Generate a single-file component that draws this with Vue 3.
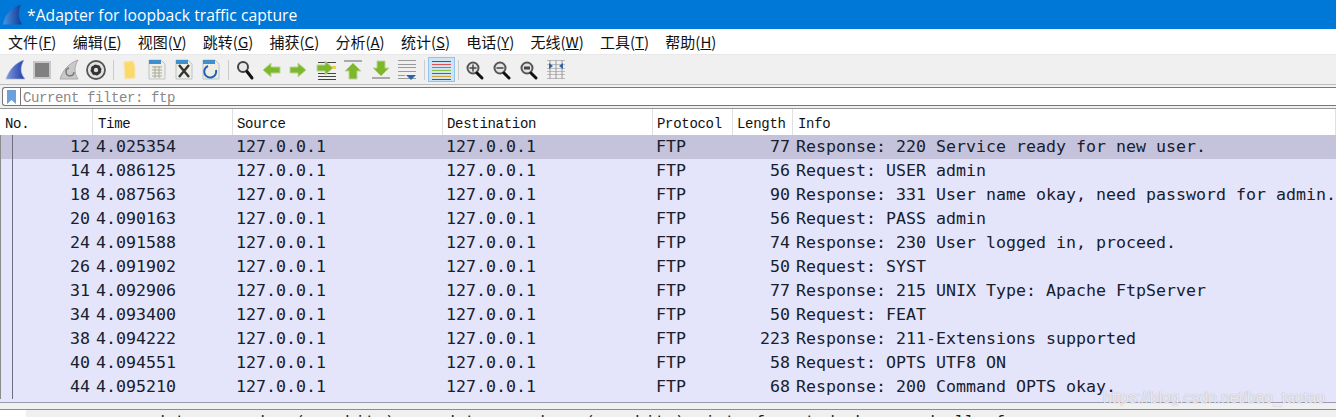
<script setup>
const menus = [['文件','F'],['编辑','E'],['视图','V'],['跳转','G'],['捕获','C'],['分析','A'],['统计','S'],['电话','Y'],['无线','W'],['工具','T'],['帮助','H']]
const cols = [
  { t: 'No.', w: 93 }, { t: 'Time', w: 140 }, { t: 'Source', w: 210 }, { t: 'Destination', w: 210 },
  { t: 'Protocol', w: 80 }, { t: 'Length', w: 60 }, { t: 'Info', w: 543 }
]
const rows = [
  [12,'4.025354',77,'Response: 220 Service ready for new user.'],
  [14,'4.086125',56,'Request: USER admin'],
  [18,'4.087563',90,'Response: 331 User name okay, need password for admin.'],
  [20,'4.090163',56,'Request: PASS admin'],
  [24,'4.091588',74,'Response: 230 User logged in, proceed.'],
  [26,'4.091902',50,'Request: SYST'],
  [31,'4.092906',77,'Response: 215 UNIX Type: Apache FtpServer'],
  [34,'4.093400',50,'Request: FEAT'],
  [38,'4.094222',223,'Response: 211-Extensions supported'],
  [40,'4.094551',58,'Request: OPTS UTF8 ON'],
  [44,'4.095210',68,'Response: 200 Command OPTS okay.']
]
const detail = 'data queued   (on white)     data rowed    (on white)point of neat dark sensed all of'
</script>

<template>
  <div class="app">
    <div class="title">
      <svg class="shark" viewBox="0 0 24 24" width="24" height="24">
        <defs><linearGradient id="fin" x1="0" y1="0" x2="1" y2="0"><stop offset="0" stop-color="#4a94e4"/><stop offset="1" stop-color="#0f3a94"/></linearGradient></defs>
        <path d="M3 21.500 C5 11 12 4 21 1.500 C18 8 18 15 22 21.500 Z" fill="url(#fin)"/>
      </svg>
      <span>*Adapter for loopback traffic capture</span>
    </div>
    <div class="menu">
      <span v-for="m in menus" :key="m[1]" class="mi">{{ m[0] }}(<u>{{ m[1] }}</u>)</span>
    </div>
    <div class="tools">
      <svg viewBox="0 0 598 29" width="598" height="29">
        <defs><linearGradient id="fin2" x1="0" y1="0" x2="1" y2="0"><stop offset="0" stop-color="#7f9bdc"/><stop offset="1" stop-color="#1f39ab"/></linearGradient></defs>
        <path d="M6 24 C9 15 15 8 24 5 C20 12 20 18 25 24 Z" fill="url(#fin2)" stroke="#a9b2cc" stroke-width=".6"/>
        <rect x="34" y="7" width="16" height="16" fill="#808080" stroke="#c8c8c8" stroke-width="2"/>
        <path d="M60 24 C63 15 69 8 78 5 C74 12 74 18 78 24 Z" fill="#c9c9c9" stroke="#aaa"/>
        <path d="M69 13 A4 4 0 1 0 74 17" fill="none" stroke="#777" stroke-width="1.500"/>
        <circle cx="96" cy="15" r="9" fill="#e4e4e4" stroke="#555" stroke-width="1.800"/>
        <circle cx="96" cy="15" r="5.500" fill="#333"/>
        <circle cx="96" cy="15" r="5.500" fill="none" stroke="#e4e4e4" stroke-width="1" stroke-dasharray="1.500 2.800"/>
        <circle cx="96" cy="15" r="2.200" fill="#ddd"/>
        <line x1="113.500" y1="5" x2="113.500" y2="25" stroke="#ccc"/>
        <path d="M124 7 L133 6 L135 11 L135 23 L125 24 Z" fill="#fbd96b" stroke="#f3e6ba"/>
        <g transform="translate(0 -2)">
          <path d="M149 7 H161 L165 11 V26 H149 Z" fill="#f0efe6" stroke="#b9c4cf"/>
          <path d="M149 7 H161 V11 H149 Z" fill="#3f8fcd"/>
          <path d="M152 14 H162 M152 17 H162 M152 20 H162 M152 23 H162 M155 13 V25 M159 13 V25" stroke="#a8a89c"/>
          <path d="M176 7 H188 L192 11 V26 H176 Z" fill="#efeee5" stroke="#b9c4cf"/>
          <path d="M176 7 H188 V11 H176 Z" fill="#3f8fcd"/>
          <path d="M179 12 L189 24 M189 12 L179 24" stroke="#333" stroke-width="2.400"/>
          <path d="M203 7 H215 L219 11 V26 H203 Z" fill="#eeede4" stroke="#b9c4cf"/>
          <path d="M203 7 H215 V11 H203 Z" fill="#3f8fcd"/>
          <path d="M208 13 A6 6 0 1 0 216 17" fill="none" stroke="#1f5fb2" stroke-width="2"/>
        </g>
        <line x1="228.500" y1="5" x2="228.500" y2="25" stroke="#ccc"/>
        <g fill="none" stroke-linecap="round">
          <circle cx="243" cy="12" r="5" stroke="#444" stroke-width="2" fill="#e8e8e8"/>
          <line x1="247" y1="16.500" x2="252" y2="23" stroke="#111" stroke-width="3"/>
        </g>
        <path d="M263 15 L271 8 V12 H280 V18 H271 V22 Z" fill="#7cb82a" stroke="#bcd49a"/>
        <path d="M306 15 L298 8 V12 H290 V18 H298 V22 Z" fill="#7cb82a" stroke="#bcd49a"/>
        <path d="M318 7.500 H336 M318 21.500 H336 M318 24.500 H336 M318 18.500 H336" stroke="#444"/>
        <path d="M332 11 H336 V14 H332 Z" fill="#f0d040"/>
        <path d="M333 13 L325 6 V10 H317 V16 H325 V20 Z" fill="#7cb82a" stroke="#bcd49a"/>
        <line x1="344" y1="6" x2="362" y2="6" stroke="#aaa" stroke-width="2"/>
        <path d="M353 8 L361 16 H357 V24 H349 V16 H345 Z" fill="#7cb82a" stroke="#bcd49a"/>
        <line x1="372" y1="23" x2="390" y2="23" stroke="#aaa" stroke-width="2"/>
        <path d="M381 21 L373 13 H377 V6 H385 V13 H389 Z" fill="#7cb82a" stroke="#bcd49a"/>
        <path d="M398 5.500 H416 M398 9.500 H416 M398 12.500 H416 M398 16.500 H416 M398 20.500 H405 M398 23.500 H416" stroke="#9a9a9a"/>
        <path d="M406 20 H416 L411 25 Z" fill="#2a64ad"/>
        <line x1="424.500" y1="5" x2="424.500" y2="25" stroke="#ccc"/>
        <rect x="428.500" y="2.500" width="26" height="24" fill="#cde4f7" stroke="#90c4ee"/>
        <path d="M432 6.500 H451" stroke="#555"/><path d="M432 9.500 H451" stroke="#e05050"/>
        <path d="M432 12.500 H451" stroke="#888"/><path d="M432 15.500 H451" stroke="#8cc040"/>
        <path d="M432 18.500 H451" stroke="#7050a0"/><path d="M432 21.500 H451" stroke="#d0a030"/>
        <path d="M432 24.500 H451" stroke="#555"/>
        <line x1="458.500" y1="5" x2="458.500" y2="25" stroke="#ccc"/>
        <g stroke-linecap="round">
          <circle cx="473" cy="13" r="5.500" stroke="#555" stroke-width="2" fill="#e4e4e4"/>
          <path d="M477 18 L482 23" stroke="#111" stroke-width="3"/>
          <path d="M470 13 H476 M473 10 V16" stroke="#444" stroke-width="1.500"/>
          <circle cx="500" cy="13" r="5.500" stroke="#555" stroke-width="2" fill="#e4e4e4"/>
          <path d="M504 18 L509 23" stroke="#111" stroke-width="3"/>
          <path d="M497 13 H503" stroke="#444" stroke-width="1.500"/>
          <circle cx="527" cy="13" r="5.500" stroke="#555" stroke-width="2" fill="#e4e4e4"/>
          <path d="M531 18 L536 23" stroke="#111" stroke-width="3"/>
          <rect x="524" y="11.500" width="6" height="3" fill="#444" stroke="none"/>
        </g>
        <path d="M547 5.500 H565 M547 23.500 H565 M547 9.500 H565 M547 19.500 H565 M547 13.500 H565 M547 16.500 H565" stroke="#bbb"/>
        <path d="M550 5 V24 M556 5 V24 M562 5 V24" stroke="#999"/>
        <path d="M549 8 L553 11 L549 14 Z M563 8 L559 11 L563 14 Z" fill="#2a64ad"/>
      </svg>
    </div>
    <div class="filter">
      <div class="book">
        <svg width="9" height="14" viewBox="0 0 9 14"><path d="M0 0 H9 V14 L4.500 10 L0 14 Z" fill="#6f9fd8"/></svg>
      </div>
      <span class="ftext">Current filter: ftp</span>
    </div>
    <div class="list">
      <div class="head">
        <div v-for="c in cols" :key="c.t" class="hc" :style="{ width: c.w + 'px' }">{{ c.t }}</div>
      </div>
      <div class="body">
        <div v-for="(r, i) in rows" :key="r[0]" class="row" :class="{ sel: i === 0 }">
          <div class="tree"></div>
          <div class="c no">{{ r[0] }}</div>
          <div class="c time">{{ r[1] }}</div>
          <div class="c addr">127.0.0.1</div>
          <div class="c addr">127.0.0.1</div>
          <div class="c proto">FTP</div>
          <div class="c len">{{ r[2] }}</div>
          <div class="c info">{{ r[3] }}</div>
        </div>
      </div>
    </div>
    <div class="detail">
      <div class="gutter"></div>
      <div class="dtext">{{ detail }}</div>
    </div>
    <div class="wm">https://blog.csdn.net/bao_taotao</div>
  </div>
</template>

<style scoped>
.app { position: relative; width: 1336px; height: 417px; overflow: hidden; background: #f0f0f0; font-family: "Liberation Sans", sans-serif; }
.title { height: 29px; background: #0078d7; color: #fff; display: flex; align-items: center; padding-left: 0; font: 15.700px "Open Sans", "Noto Sans", sans-serif; }
.shark { flex: none; margin: 0 3px 0 0; }
.menu { height: 25px; background: #fff; border-bottom: 1px solid #e8e8e8; display: flex; align-items: center; padding-left: 8px; gap: 16.200px; font: 15px "Noto Sans CJK SC", sans-serif; color: #111; }
.mi { white-space: nowrap; }
.tools { height: 29px; background: #f0f0f0; border-bottom: 1px solid #bdbdbd; }
.tools svg { display: block; }
.filter { box-sizing: border-box; height: 19px; margin: 2px 0 0 2px; background: #fff; border: 1px solid #777; border-right: none; border-radius: 3px 0 0 3px; display: flex; align-items: center; color: #888; font: 14px "Liberation Mono", monospace; letter-spacing: -.4px; }
.ftext { padding-top: 2px; }
.book { flex: none; box-sizing: border-box; width: 18px; height: 17px; border-right: 1px solid #777; display: flex; align-items: center; justify-content: center; margin-right: 2px; }
.list { margin-top: 2px; border-top: 1px solid #999; }
.head { height: 26px; background: #fff; display: flex; }
.hc { flex: none; border-right: 1px solid #e0e0e0; padding: 3px 0 0 4px; box-sizing: border-box; font: 14px/24px "Liberation Mono", monospace; letter-spacing: -.3px; color: #111; }
.hc:nth-child(1), .hc:nth-child(2), .hc:nth-child(7) { padding-left: 5px; }
.body { background: #e4e4fb; border-bottom: 1px solid #9a9ab0; padding-bottom: 3px; }
.row { box-sizing: border-box; height: 24px; padding-bottom: 2px; display: flex; align-items: center; color: #16202c; font: 16.610px "DejaVu Sans Mono", monospace; white-space: pre; position: relative; box-shadow: inset 1px 0 0 #8c8c8c; }
.row.sel { background: #c5c3dc; }
.tree { position: absolute; left: 12px; top: 0; bottom: 0; border-left: 1px solid #6e6e7e; }
.c { box-sizing: border-box; flex: none; }
.no { width: 93px; padding-right: 3px; text-align: right; }
.time { width: 140px; padding-left: 3px; }
.addr { width: 210px; padding-left: 3px; }
.proto { width: 80px; padding-left: 3px; }
.len { width: 60px; padding-right: 3px; text-align: right; }
.info { padding-left: 3px; }
.detail { margin-top: 6px; height: 7px; display: flex; border-top: 1px solid #8c8c8c; background: #f0f0f0; overflow: hidden; }
.gutter { flex: none; width: 26px; background: #fff; }
.dtext { font: 16.610px/24px "DejaVu Sans Mono", monospace; white-space: pre; color: #16202c; padding-left: 129px; }
.wm { position: absolute; left: 1103px; top: 389px; font: 15.600px "Liberation Sans", sans-serif; color: rgba(255,255,255,.8); text-shadow: 0 0 1px rgba(100,100,100,.6); white-space: nowrap; }
</style>

<style>
html, body { margin: 0; background: #f0f0f0; overflow: hidden; }
</style>
